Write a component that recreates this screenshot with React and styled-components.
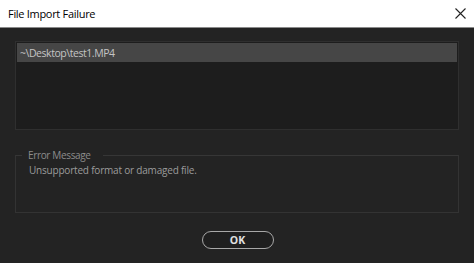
import React from 'react';
import styled, {createGlobalStyle} from 'styled-components';

const GlobalStyle = createGlobalStyle`
    html, body {
        margin: 0;
        padding: 0;
        background: #232323;
    }
    * {
        box-sizing: border-box;
    }
`;

const Window = styled.div`
    width: 474px;
    height: 263px;
    display: flex;
    flex-direction: column;
    background: #232323;
    font-family: "Open Sans", "Noto Sans", sans-serif;
    overflow: hidden;
`;

const TitleBar = styled.div`
    height: 28px;
    flex-shrink: 0;
    display: flex;
    align-items: center;
    justify-content: space-between;
    padding: 0 2px 0 8px;
    background: #ffffff;
    border-bottom: 1px solid #8a8a8a;
`;

const Title = styled.span`
    font-size: 11px;
    color: #000;
    letter-spacing: -0.3px;
`;

const CloseButton = styled.button`
    width: 24px;
    height: 22px;
    display: flex;
    align-items: center;
    justify-content: center;
    border: none;
    padding: 0;
    background: transparent;
`;

const Body = styled.div`
    flex: 1;
    display: flex;
    flex-direction: column;
    padding: 13px 15px 0 15px;
`;

const FileList = styled.div`
    height: 89px;
    background: #1d1d1d;
    border: 1px solid #2f2f2f;
    padding: 1px;
`;

const FileRow = styled.div`
    height: 19px;
    display: flex;
    align-items: center;
    padding-left: 3px;
    background: ${p => (p.$selected ? '#464646' : 'transparent')};
    color: #c4c4c4;
    font-size: 10.5px;
    letter-spacing: -0.45px;
`;

const Group = styled.fieldset`
    margin: 18px 0 0 0;
    padding: 0 0 0 13px;
    height: 65px;
    border: 1px solid #333333;
    border-top-color: #363636;
`;

const Legend = styled.legend`
    margin-left: -7px;
    padding: 0 12px 0 6px;
    color: #8c8c8c;
    font-size: 10px;
    letter-spacing: -0.35px;
`;

const Message = styled.div`
    color: #9c9c9c;
    font-size: 10px;
    letter-spacing: -0.2px;
    margin-top: 1px;
`;

const Footer = styled.div`
    display: flex;
    justify-content: center;
    padding-top: 18px;
`;

const OkButton = styled.button`
    width: 72px;
    height: 18px;
    margin-left: 1px;
    border: 1.5px solid #a8a8a8;
    border-radius: 9px;
    background: #1f1f1f;
    color: #e0e0e0;
    font-family: "Open Sans", "Noto Sans", sans-serif;
    font-weight: 700;
    font-size: 10.5px;
    padding: 0;
    line-height: 1;
`;

export default function App() {
    return (
        <Window>
            <GlobalStyle />
            <TitleBar>
                <Title>File Import Failure</Title>
                <CloseButton aria-label="Close">
                    <svg width="11" height="11" viewBox="0 0 11 11">
                        <path d="M0.5 0.5 L10.5 10.5 M10.5 0.5 L0.5 10.5" stroke="#222" strokeWidth="1.1" fill="none" />
                    </svg>
                </CloseButton>
            </TitleBar>
            <Body>
                <FileList>
                    <FileRow $selected>~\Desktop\test1.MP4</FileRow>
                </FileList>
                <Group>
                    <Legend>Error Message</Legend>
                    <Message>Unsupported format or damaged file.</Message>
                </Group>
                <Footer>
                    <OkButton>OK</OkButton>
                </Footer>
            </Body>
        </Window>
    );
}
